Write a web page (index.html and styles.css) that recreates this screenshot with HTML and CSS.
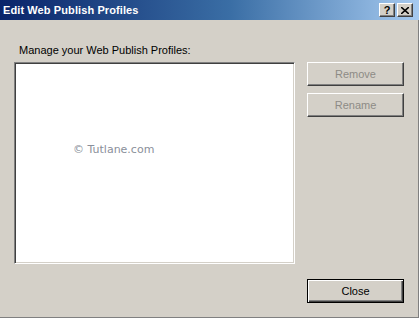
FILE: index.html
```html
<!DOCTYPE html>
<html lang="en">
<head>
    <meta charset="UTF-8">
    <title>Edit Web Publish Profiles</title>
    <link rel="stylesheet" href="styles.css">
</head>
<body>
    <div class="window">
        <div class="titlebar">
            <span class="title">Edit Web Publish Profiles</span>
            <div class="caption-buttons">
                <button class="cap-btn help">?</button>
                <button class="cap-btn close-x">
                    <svg width="8" height="7" viewBox="0 0 8 7">
                        <path d="M0 0 L8 7 M8 0 L0 7" stroke="#000" stroke-width="1.6"/>
                    </svg>
                </button>
            </div>
        </div>

        <div class="content">
            <label class="caption">Manage your Web Publish Profiles:</label>
            <div class="main">
                <div class="listbox">
                    <span class="watermark">© Tutlane.com</span>
                </div>
                <div class="side">
                    <button class="btn" disabled>Remove</button>
                    <button class="btn" disabled>Rename</button>
                    <button class="btn default">Close</button>
                </div>
            </div>
        </div>
    </div>
</body>
</html>
```

FILE: styles.css
```css
body {
    margin: 0;
    font-family: 'Liberation Sans', Arial, sans-serif;
    font-size: 11px;
    background-color: #d4d0c8;
}

.window {
    width: 419px;
    height: 318px;
    box-sizing: border-box;
    background-color: #d4d0c8;
    border-right: 1px solid #808080;
    border-bottom: 1px solid #808080;
    display: flex;
    flex-direction: column;
}

.titlebar {
    height: 20px;
    background: linear-gradient(to right, #0a246a 0%, #3a6ea5 55%, #a6caf0 100%);
    display: flex;
    align-items: center;
    justify-content: space-between;
    padding: 0 2px 0 3px;
    margin-right: -1px;
}

.title {
    color: #fff;
    font-weight: bold;
    font-size: 11px;
    letter-spacing: 0.1px;
}

.caption-buttons {
    display: flex;
    gap: 2px;
    padding-right: 4px;
}

.cap-btn {
    width: 16px;
    height: 14px;
    padding: 0;
    background-color: #d4d0c8;
    border: 1px solid;
    border-color: #fff #404040 #404040 #fff;
    box-shadow: inset -1px -1px #808080;
    display: flex;
    align-items: center;
    justify-content: center;
    font-family: 'Liberation Sans', Arial, sans-serif;
    font-weight: bold;
    font-size: 11px;
    line-height: 1;
    color: #000;
}

.content {
    flex: 1;
    padding: 23px 0 0 14px;
    display: flex;
    flex-direction: column;
}

.caption {
    display: block;
    padding-left: 5px;
    line-height: 14px;
    margin-bottom: 5px;
    color: #000;
}

.main {
    display: flex;
    align-items: flex-start;
    gap: 12px;
}

.listbox {
    width: 281px;
    height: 202px;
    box-sizing: border-box;
    background-color: #fff;
    border: 1px solid;
    border-color: #808080 #fff #fff #808080;
    box-shadow: inset 1px 1px #404040, inset -1px -1px #d4d0c8;
    padding: 80px 0 0 58px;
}

.watermark {
    font-family: 'DejaVu Sans', Verdana, sans-serif;
    font-size: 11px;
    color: #8a8f9a;
}

.side {
    width: 97px;
    height: 241px;
    display: flex;
    flex-direction: column;
    gap: 7px;
}

.btn {
    height: 24px;
    box-sizing: border-box;
    background-color: #d4d0c8;
    border: 1px solid;
    border-color: #fff #404040 #404040 #fff;
    box-shadow: inset -1px -1px #808080;
    font-family: 'Liberation Sans', Arial, sans-serif;
    font-size: 11px;
    color: #000;
    padding: 0;
}

.btn:disabled {
    color: #8d8b86;
}

.btn.default {
    margin-top: auto;
    border: 1px solid #000;
    box-shadow: inset 1px 1px #fff, inset -1px -1px #404040, inset -2px -2px #808080;
}
```
